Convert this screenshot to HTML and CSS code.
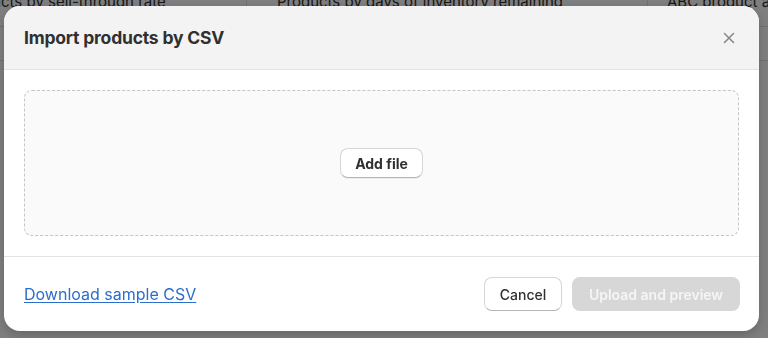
FILE: index.html
```html
<!DOCTYPE html>
<html>
<head>
  <meta charset="UTF-8">
  <title>Import products by CSV</title>
  <link rel="stylesheet" href="styles.css">
</head>
<body>
  <!-- page behind the dialog -->
  <div class="page">
    <div class="reportRow headRow">
      <div class="reportCell cellA">Products by sell-through rate</div>
      <div class="reportCell cellB">Products by days of inventory remaining</div>
      <div class="reportCell cellC">ABC product analysis</div>
    </div>
    <div class="reportRow">
      <div class="reportCell cellA">&nbsp;</div>
      <div class="reportCell cellB">&nbsp;</div>
      <div class="reportCell cellC">o</div>
    </div>
  </div>

  <div class="backdrop">
    <div class="modal">
      <div class="modalHeader">
        <h2 class="modalTitle">Import products by CSV</h2>
        <button class="closeButton" aria-label="Close">
          <svg width="12" height="12" viewBox="0 0 12 12">
            <path d="M1.5 1.5 L10.5 10.5 M10.5 1.5 L1.5 10.5" stroke="#8a8a8a" stroke-width="1.6" stroke-linecap="round" fill="none"/>
          </svg>
        </button>
      </div>

      <div class="modalBody">
        <div class="dropZone">
          <button class="addFileButton">Add file</button>
        </div>
      </div>

      <div class="modalFooter">
        <a class="sampleLink" href="#">Download sample CSV</a>
        <div class="footerButtons">
          <button class="cancelButton">Cancel</button>
          <button class="uploadButton" disabled>Upload and preview</button>
        </div>
      </div>
    </div>
  </div>
</body>
</html>
```

FILE: styles.css
```css
body {
  margin: 0;
  padding: 0;
  overflow: hidden;
  font-family: Inter, "Liberation Sans", Arial, sans-serif;
  background: #ffffff;
  color: #303030;
  width: 768px;
  height: 338px;
}

/* background page */
.page {
  margin-top: -10px;
}
.reportRow {
  display: flex;
  height: 33px;
  border-bottom: 1px solid #e3e3e3;
  background: #ffffff;
}
.headRow {
  height: 36px;
}
.reportCell {
  font-size: 15px;
  line-height: 24px;
  white-space: nowrap;
  overflow: hidden;
  border-right: 1px solid #e3e3e3;
  color: #303030;
}
.cellA {
  width: 246px;
  text-indent: -41px;
}
.cellB {
  width: 370px;
  padding-left: 30px;
}
.cellC {
  flex: 1;
  padding-left: 19px;
  border-right: none;
}

.backdrop {
  position: fixed;
  inset: 0;
  background: rgba(0, 0, 0, 0.5);
}

/* dialog */
.modal {
  position: absolute;
  left: 4px;
  top: 6px;
  width: 755px;
  height: 325px;
  background: #ffffff;
  border-radius: 16px;
  overflow: hidden;
  display: flex;
  flex-direction: column;
  box-shadow: 0 4px 12px rgba(0, 0, 0, 0.2);
}

.modalHeader {
  height: 63px;
  background: #f3f3f3;
  border-bottom: 1px solid #e3e3e3;
  display: flex;
  align-items: center;
  padding: 0 20px;
}
.modalTitle {
  margin: 0;
  font-size: 17.5px;
  font-weight: 650;
  color: #303030;
  letter-spacing: -0.2px;
  flex: 1;
}
.closeButton {
  background: none;
  border: none;
  padding: 0;
  width: 24px;
  height: 24px;
  display: flex;
  align-items: center;
  justify-content: center;
  margin-right: -2px;
  cursor: pointer;
}

.modalBody {
  padding: 20px;
  border-bottom: 1px solid #e3e3e3;
}
.dropZone {
  height: 144px;
  border: 1px dashed #c4c4c4;
  border-radius: 8px;
  background: #fafafa;
  display: flex;
  align-items: center;
  justify-content: center;
}
.addFileButton {
  font-family: inherit;
  font-size: 14px;
  font-weight: 650;
  color: #303030;
  background: #ffffff;
  border: 1px solid #d6d6d6;
  border-bottom-color: #b5b5b5;
  border-radius: 8px;
  height: 30px;
  padding: 0 14px;
  box-shadow: 0 1px 0 rgba(0, 0, 0, 0.05);
}

.modalFooter {
  flex: 1;
  display: flex;
  align-items: center;
  justify-content: space-between;
  padding: 0 19px 0 20px;
}
.sampleLink {
  color: #2c6ecb;
  font-size: 16px;
  text-decoration: underline;
  text-underline-offset: 2px;
}
.footerButtons {
  display: flex;
  gap: 10px;
}
.cancelButton {
  font-family: inherit;
  font-size: 14px;
  font-weight: 550;
  color: #303030;
  background: #ffffff;
  border: 1px solid #d6d6d6;
  border-bottom-color: #b5b5b5;
  border-radius: 8px;
  height: 34px;
  width: 78px;
}
.uploadButton {
  font-family: inherit;
  font-size: 14px;
  font-weight: 600;
  color: #f5f5f5;
  background: #d7d7d7;
  border: none;
  border-radius: 8px;
  height: 34px;
  width: 168px;
}
```
